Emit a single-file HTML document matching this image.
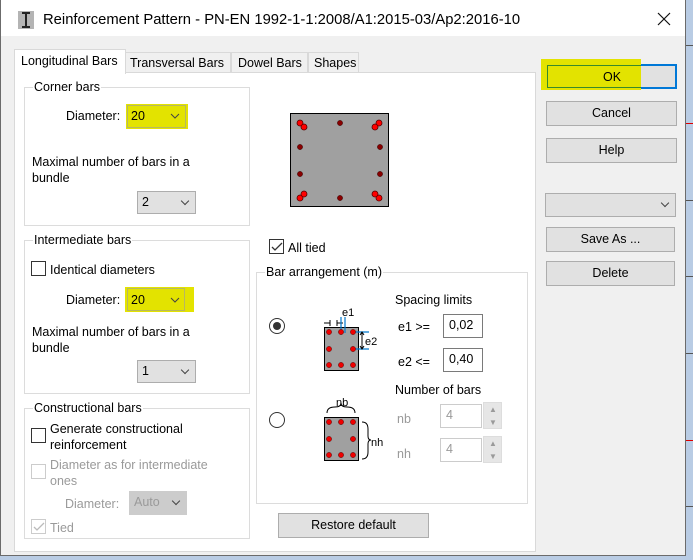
<!DOCTYPE html>
<html><head><meta charset="utf-8"><style>
*{box-sizing:border-box;margin:0;padding:0}
body{width:693px;height:560px;overflow:hidden;background:#b9cce4;font-family:"Liberation Sans",sans-serif;font-size:12.5px;color:#000;position:relative}
.a{position:absolute}
.t{position:absolute;white-space:nowrap;line-height:14px}
.grp{position:absolute;border:1px solid #dcdcdc}
.lbl{position:absolute;top:-8px;left:8px;background:#fff;padding:0 1px;line-height:14px}
.cb{position:absolute;width:15px;height:15px;border:1px solid #333;background:#fff}
.cbd{border-color:#ccc}
.combo{position:absolute;background:#e1e1e1;border:1px solid #adadad;line-height:20px;padding-left:4px}
.combo:after{content:"";position:absolute;right:7px;top:6px;width:5px;height:5px;border-right:1px solid #444;border-bottom:1px solid #444;transform:rotate(45deg)}
.btn{position:absolute;background:#e1e1e1;border:1px solid #adadad;text-align:center;line-height:22px}
.hl{position:absolute;background:#e3e300}
.box{position:absolute;background:#fff;border:1px solid #7a7a7a;line-height:20px;padding-left:5px}
.dis{color:#9a9a9a}
</style></head><body>
<div class="a" style="left:686px;top:45px;width:7px;height:1px;background:#555"></div>
<div class="a" style="left:686px;top:123px;width:7px;height:1px;background:#d00"></div>
<div class="a" style="left:686px;top:200px;width:7px;height:1px;background:#555"></div>
<div class="a" style="left:686px;top:276px;width:7px;height:1px;background:#555"></div>
<div class="a" style="left:686px;top:353px;width:7px;height:1px;background:#555"></div>
<div class="a" style="left:686px;top:440px;width:7px;height:1px;background:#d00"></div>
<div class="a" style="left:686px;top:506px;width:7px;height:1px;background:#555"></div>
<div class="a" style="left:0;top:0;width:686px;height:556px;background:#f0f0f0;border:1px solid #6b6b6b;border-top:none"></div>
<div class="a" style="left:1px;top:0;width:684px;height:36px;background:#fff"></div>
<div class="a" style="left:18px;top:11px;width:16px;height:18px;background:#b4b4b4"></div>
<div class="a" style="left:22px;top:12px;width:8px;height:2px;background:#222"></div>
<div class="a" style="left:25px;top:12px;width:2px;height:16px;background:#222"></div>
<div class="a" style="left:22px;top:26px;width:8px;height:2px;background:#222"></div>
<div class="t" style="left:43px;top:11px;font-size:14.8px;line-height:18px">Reinforcement Pattern - PN-EN 1992-1-1:2008/A1:2015-03/Ap2:2016-10</div>
<svg class="a" style="left:657px;top:12px" width="14" height="14"><path d="M1 1L13 13M13 1L1 13" stroke="#111" stroke-width="1.2"/></svg>
<div class="a" style="left:125px;top:52px;width:106px;height:21px;background:#f0f0f0;border:1px solid #d9d9d9"></div>
<div class="t" style="left:130px;top:56px">Transversal Bars</div>
<div class="a" style="left:231px;top:52px;width:77px;height:21px;background:#f0f0f0;border:1px solid #d9d9d9"></div>
<div class="t" style="left:238px;top:56px">Dowel Bars</div>
<div class="a" style="left:308px;top:52px;width:51px;height:21px;background:#f0f0f0;border:1px solid #d9d9d9"></div>
<div class="t" style="left:314px;top:56px">Shapes</div>
<div class="a" style="left:14px;top:72px;width:522px;height:480px;background:#fff;border:1px solid #d9d9d9"></div>
<div class="a" style="left:14px;top:49px;width:112px;height:25px;background:#fff;border:1px solid #d9d9d9;border-bottom:none"></div>
<div class="t" style="left:21px;top:54px">Longitudinal Bars</div>
<div class="grp" style="left:24px;top:87px;width:226px;height:139px"><span class="lbl">Corner bars</span></div>
<div class="t" style="left:66px;top:109px">Diameter:</div>
<div class="hl" style="left:126px;top:104px;width:62px;height:25px"></div>
<div class="a" style="left:127px;top:105px;width:59px;height:23px;border:1px solid #b8b860"></div>
<div class="t" style="left:131px;top:109px">20</div>
<svg class="a" style="left:170px;top:113px" width="10" height="6"><path d="M1 1L5 5L9 1" stroke="#444" fill="none"/></svg>
<div class="t" style="left:32px;top:155px">Maximal number of bars in a</div>
<div class="t" style="left:32px;top:171px">bundle</div>
<div class="combo" style="left:137px;top:191px;width:59px;height:23px">2</div>
<div class="grp" style="left:24px;top:240px;width:226px;height:154px"><span class="lbl">Intermediate bars</span></div>
<div class="cb" style="left:31px;top:261px"></div>
<div class="t" style="left:50px;top:263px">Identical diameters</div>
<div class="t" style="left:66px;top:293px">Diameter:</div>
<div class="hl" style="left:125px;top:287px;width:69px;height:25px"></div>
<div class="a" style="left:127px;top:288px;width:58px;height:23px;border:1px solid #b8b860"></div>
<div class="t" style="left:131px;top:293px">20</div>
<svg class="a" style="left:170px;top:297px" width="10" height="6"><path d="M1 1L5 5L9 1" stroke="#444" fill="none"/></svg>
<div class="t" style="left:32px;top:325px">Maximal number of bars in a</div>
<div class="t" style="left:32px;top:341px">bundle</div>
<div class="combo" style="left:137px;top:360px;width:59px;height:23px">1</div>
<div class="grp" style="left:24px;top:408px;width:226px;height:131px"><span class="lbl">Constructional bars</span></div>
<div class="cb" style="left:31px;top:428px"></div>
<div class="t" style="left:50px;top:422px">Generate constructional</div>
<div class="t" style="left:50px;top:438px">reinforcement</div>
<div class="cb cbd" style="left:31px;top:464px"></div>
<div class="t dis" style="left:50px;top:458px">Diameter as for intermediate</div>
<div class="t dis" style="left:50px;top:474px">ones</div>
<div class="t dis" style="left:65px;top:497px">Diameter:</div>
<div class="combo dis" style="left:129px;top:491px;width:58px;height:24px;background:#ccc;border-color:#ccc">Auto</div>
<div class="cb cbd" style="left:31px;top:519px"></div>
<svg class="a" style="left:33px;top:522px" width="12" height="10"><path d="M1 5L4 8L11 1" stroke="#bbb" fill="none" stroke-width="1.3"/></svg>
<div class="t dis" style="left:50px;top:521px">Tied</div>
<svg class="a" style="left:290px;top:113px" width="101" height="95">
<rect x="0.5" y="0.5" width="98" height="93" fill="#a0a0a0" stroke="#000"/>
<g fill="#f00" stroke="#500" stroke-width="0.8">
<circle cx="10" cy="10" r="3"/><circle cx="14" cy="14" r="3"/>
<circle cx="89" cy="10" r="3"/><circle cx="85" cy="14" r="3"/>
<circle cx="10" cy="85" r="3"/><circle cx="14" cy="81" r="3"/>
<circle cx="89" cy="85" r="3"/><circle cx="85" cy="81" r="3"/>
</g>
<g fill="#800" stroke="#300" stroke-width="0.5">
<circle cx="50" cy="10" r="2.6"/><circle cx="50" cy="85" r="2.6"/>
<circle cx="10" cy="34" r="2.6"/><circle cx="10" cy="61" r="2.6"/>
<circle cx="90" cy="34" r="2.6"/><circle cx="90" cy="61" r="2.6"/>
</g></svg>
<div class="cb" style="left:269px;top:239px"></div>
<svg class="a" style="left:271px;top:242px" width="12" height="10"><path d="M1 5L4 8L11 1" stroke="#333" fill="none" stroke-width="1.3"/></svg>
<div class="t" style="left:288px;top:241px">All tied</div>
<div class="grp" style="left:256px;top:272px;width:272px;height:232px"><span class="lbl">Bar arrangement (m)</span></div>
<div class="a" style="left:269px;top:318px;width:16px;height:16px;border:1px solid #333;border-radius:50%;background:#fff"></div>
<div class="a" style="left:273px;top:322px;width:8px;height:8px;border-radius:50%;background:#333"></div>
<div class="a" style="left:269px;top:412px;width:16px;height:16px;border:1px solid #333;border-radius:50%;background:#fff"></div>
<svg class="a" style="left:315px;top:303px" width="70" height="165">
<text x="27" y="13" font-family="Liberation Sans" font-size="11">e1</text>
<path d="M9 20H15M15 17V23M22 17V23M22 20H28" stroke="#000" fill="none"/>
<rect x="9.5" y="24.5" width="34" height="43" fill="#a0a0a0" stroke="#000"/>
<path d="M26 14V30M30 14V30M38 29H54M38 46H54" stroke="#07c" stroke-width="1.2"/>
<path d="M47 30V45M45 32L47 29L49 32M45 43L47 46L49 43" stroke="#000" fill="none"/>
<text x="50" y="42" font-family="Liberation Sans" font-size="11">e2</text>
<g fill="#e00" stroke="#500" stroke-width="0.5"><circle cx="14" cy="29" r="2.6"/><circle cx="26" cy="29" r="2.6"/><circle cx="38" cy="29" r="2.6"/><circle cx="14" cy="46" r="2.6"/><circle cx="38" cy="46" r="2.6"/><circle cx="14" cy="62" r="2.6"/><circle cx="26" cy="62" r="2.6"/><circle cx="38" cy="62" r="2.6"/></g>
<text x="21" y="103" font-family="Liberation Sans" font-size="11">nb</text>
<path d="M12 110Q12 104 20 104Q26 104 26 100Q26 104 32 104Q40 104 40 110" stroke="#000" fill="none"/>
<rect x="9.5" y="114.5" width="34" height="43" fill="#a0a0a0" stroke="#000"/>
<g fill="#e00" stroke="#500" stroke-width="0.5"><circle cx="14" cy="119" r="2.6"/><circle cx="26" cy="119" r="2.6"/><circle cx="38" cy="119" r="2.6"/><circle cx="14" cy="136" r="2.6"/><circle cx="38" cy="136" r="2.6"/><circle cx="14" cy="152" r="2.6"/><circle cx="26" cy="152" r="2.6"/><circle cx="38" cy="152" r="2.6"/></g>
<path d="M47 119Q53 119 53 126V133Q53 137 56 137Q53 137 53 141V149Q53 156 47 156" stroke="#000" fill="none"/>
<text x="56" y="143" font-family="Liberation Sans" font-size="11">nh</text>
</svg>
<div class="t" style="left:395px;top:293px">Spacing limits</div>
<div class="t" style="left:398px;top:320px">e1 &gt;=</div>
<div class="box" style="left:443px;top:314px;width:40px;height:24px">0,02</div>
<div class="t" style="left:398px;top:355px">e2 &lt;=</div>
<div class="box" style="left:443px;top:348px;width:40px;height:24px">0,40</div>
<div class="t" style="left:395px;top:383px">Number of bars</div>
<div class="t dis" style="left:397px;top:412px">nb</div>
<div class="box dis" style="left:440px;top:404px;width:42px;height:24px;border-color:#ccc">4</div>
<div class="a" style="left:483px;top:402px;width:19px;height:27px;background:#e6e6e6;border:1px solid #ddd"></div>
<div class="t dis" style="left:489px;top:403px;font-size:8px">▲</div><div class="t dis" style="left:489px;top:416px;font-size:8px">▼</div>
<div class="t dis" style="left:397px;top:447px">nh</div>
<div class="box dis" style="left:440px;top:438px;width:42px;height:24px;border-color:#ccc">4</div>
<div class="a" style="left:483px;top:436px;width:19px;height:27px;background:#e6e6e6;border:1px solid #ddd"></div>
<div class="t dis" style="left:489px;top:437px;font-size:8px">▲</div><div class="t dis" style="left:489px;top:450px;font-size:8px">▼</div>
<div class="btn" style="left:278px;top:513px;width:151px;height:25px">Restore default</div>
<div class="btn" style="left:546px;top:64px;width:131px;height:25px;border:2px solid #0078d7"></div>
<div class="hl" style="left:541px;top:59px;width:100px;height:31px"></div>
<div class="a" style="left:547px;top:65px;width:94px;height:23px;border:1px solid #3a8a2a;border-right:none"></div>
<div class="t" style="left:603px;top:70px">OK</div>
<div class="btn" style="left:546px;top:101px;width:131px;height:25px">Cancel</div>
<div class="btn" style="left:546px;top:138px;width:131px;height:25px">Help</div>
<div class="combo" style="left:545px;top:193px;width:131px;height:24px"></div>
<div class="btn" style="left:546px;top:227px;width:129px;height:25px">Save As ...</div>
<div class="btn" style="left:546px;top:261px;width:129px;height:25px">Delete</div>
</body></html>
